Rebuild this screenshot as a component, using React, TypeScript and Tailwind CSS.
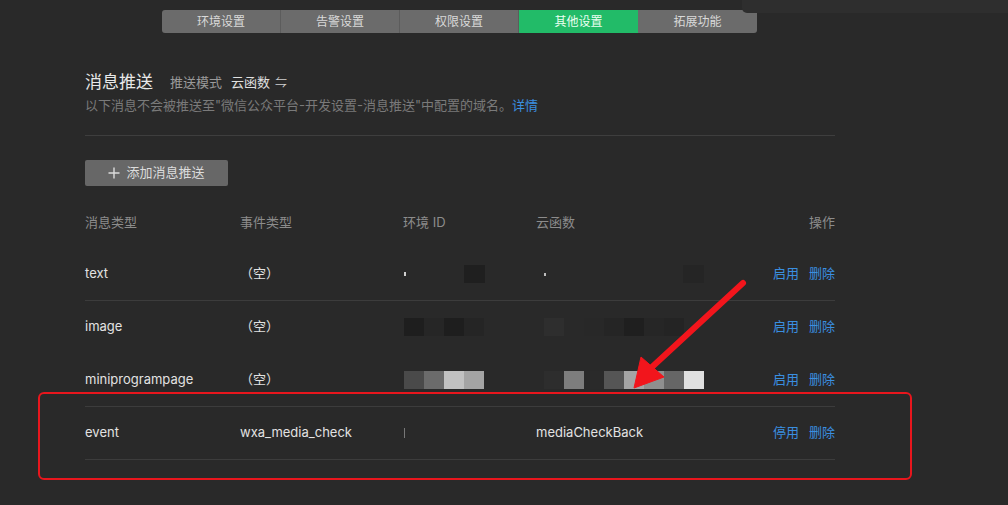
import React from "react";

const tabs = ["环境设置", "告警设置", "权限设置", "其他设置", "拓展功能"];

type Block = { w: number; c: string; h?: number };

const T = "transparent";

// pixelated (censored) cells, left→right in 20px steps
const envBlocks: Block[][] = [
  [{ w: 2, c: "#cfcfcf", h: 4 }, { w: 58, c: T }, { w: 21, c: "#1f1f1f" }],
  [{ w: 20, c: "#1e1e1e" }, { w: 20, c: "#262626" }, { w: 20, c: "#1e1e1e" }, { w: 20, c: "#252525" }],
  [{ w: 20, c: "#4a4a4a" }, { w: 20, c: "#6b6b6b" }, { w: 20, c: "#c1c1c1" }, { w: 20, c: "#a4a4a4" }],
];

const fnBlocks: Block[][] = [
  [{ w: 2, c: "#bdbdbd", h: 3 }, { w: 137, c: T }, { w: 21, c: "#252525" }],
  [
    { w: 20, c: "#2e2e2e" }, { w: 20, c: T }, { w: 20, c: "#282828" }, { w: 20, c: "#252525" },
    { w: 20, c: "#1f1f1f" }, { w: 20, c: "#262626" }, { w: 20, c: "#242424" },
  ],
  [
    { w: 20, c: "#2d2d2d" }, { w: 20, c: "#7d7d7d" }, { w: 20, c: "#2a2a2a" }, { w: 20, c: "#555555" },
    { w: 20, c: "#a5a5a5" }, { w: 20, c: "#8f8f8f" }, { w: 20, c: "#666666" }, { w: 20, c: "#e0e0e0" },
  ],
];

function Mosaic({ blocks, offset = 0 }: { blocks: Block[]; offset?: number }) {
  return (
    <div className="flex items-center" style={{ marginLeft: offset }}>
      {blocks.map((b, i) => (
        <div key={i} style={{ width: b.w, height: b.h ?? 18, background: b.c }} />
      ))}
    </div>
  );
}

const rows = [
  { type: "text", event: "（空）", env: 0, fn: 0, act: "启用", line: true },
  { type: "image", event: "（空）", env: 1, fn: 1, act: "启用", line: false },
  { type: "miniprogrampage", event: "（空）", env: 2, fn: 2, act: "启用", line: true },
];

function Actions({ first }: { first: string }) {
  return (
    <div className="ml-auto flex gap-[10px] text-[#3a8fe0]">
      <span>{first}</span>
      <span>删除</span>
    </div>
  );
}

export default function App() {
  return (
    <div
      className="relative h-[505px] w-[1008px] overflow-hidden bg-[#292929] text-[13px] text-[#e2e2e2]"
      style={{ fontFamily: '"Inter", "Noto Sans", "Noto Sans CJK SC", sans-serif' }}
    >
      {/* panel peeking in at top right */}
      <div className="absolute right-0 top-0 h-[13px] w-[266px] rounded-bl-[5px] bg-[#2e2e2e]" />

      {/* tab bar */}
      <div className="ml-[162px] mt-[10px] flex h-[23px] w-[595px] overflow-hidden rounded-[3px] text-[12px]">
        {tabs.map((t, i) => (
          <div
            key={t}
            className={
              i === 3
                ? "flex w-[119px] items-center justify-center bg-[#22bb68] text-[#eafff1]"
                : "flex w-[119px] items-center justify-center border-r border-[#5c5c5c] bg-[#6b6b6b] text-[#d9d9d9] last:border-r-0"
            }
          >
            {t}
          </div>
        ))}
      </div>

      <div className="ml-[85px] w-[750px]">
        {/* title */}
        <div className="mt-[38px] flex h-[24px] items-center">
          <span className="text-[17px] text-[#e8e8e8]">消息推送</span>
          <span className="ml-[17px] text-[#9a9a9a]">推送模式</span>
          <span className="ml-[9px] text-[#e0e0e0]">云函数</span>
          <span className="ml-[5px] text-[12px] text-[#cfcfcf]">⇋</span>
        </div>
        <div className="h-[20px] leading-[20px] text-[#7a7a7a]">
          以下消息不会被推送至"微信公众平台-开发设置-消息推送"中配置的域名。
          <span className="text-[#3a8fe0]">详情</span>
        </div>
        <div className="mt-[20px] h-px bg-[#3e3e3e]" />

        {/* add button */}
        <button className="mt-[24px] flex h-[26px] w-[143px] items-center justify-center gap-[6px] rounded-[2px] bg-[#676767] text-[#dcdcdc]">
          <svg width="12" height="12" viewBox="0 0 12 12">
            <path d="M6 0.5v11M0.5 6h11" stroke="#dcdcdc" strokeWidth="1.4" />
          </svg>
          添加消息推送
        </button>

        {/* table */}
        <div className="mt-[11px] flex h-[51px] items-center text-[#8c8c8c]">
          <div className="w-[155px]">消息类型</div>
          <div className="w-[163px]">事件类型</div>
          <div className="w-[133px]">环境 ID</div>
          <div>云函数</div>
          <div className="ml-auto">操作</div>
        </div>

        {rows.map((r) => (
          <div
            key={r.type}
            className={
              r.line
                ? "flex h-[53px] items-center border-b border-[#3c3c3c]"
                : "flex h-[53px] items-center border-b border-transparent"
            }
          >
            <div className="w-[155px]">{r.type}</div>
            <div className="w-[163px]">{r.event}</div>
            <div className="w-[133px]">
              <Mosaic blocks={envBlocks[r.env]} offset={1} />
            </div>
            <div className="w-[200px]">
              <Mosaic blocks={fnBlocks[r.fn]} offset={8} />
            </div>
            <Actions first={r.act} />
          </div>
        ))}

        <div className="flex h-[53px] items-center border-b border-[#3c3c3c]">
          <div className="w-[155px]">event</div>
          <div className="w-[163px]">wxa_media_check</div>
          <div className="w-[133px]">
            <div className="ml-[1px] h-[10px] w-px bg-[#777]" />
          </div>
          <div>mediaCheckBack</div>
          <Actions first="停用" />
        </div>
      </div>

      {/* annotation: red box and arrow */}
      <div className="pointer-events-none absolute left-[38px] top-[392px] h-[88px] w-[874px] rounded-[6px] border-[2.5px] border-[#e8161d]" />
      <svg className="pointer-events-none absolute left-0 top-0" width="1008" height="505">
        <path d="M743 283 L652 367" stroke="#f2151c" strokeWidth="6" strokeLinecap="round" />
        <path d="M634 388 L641 357 L664 377 Z" fill="#f2151c" stroke="#f2151c" strokeWidth="1" strokeLinejoin="round" />
      </svg>
    </div>
  );
}
